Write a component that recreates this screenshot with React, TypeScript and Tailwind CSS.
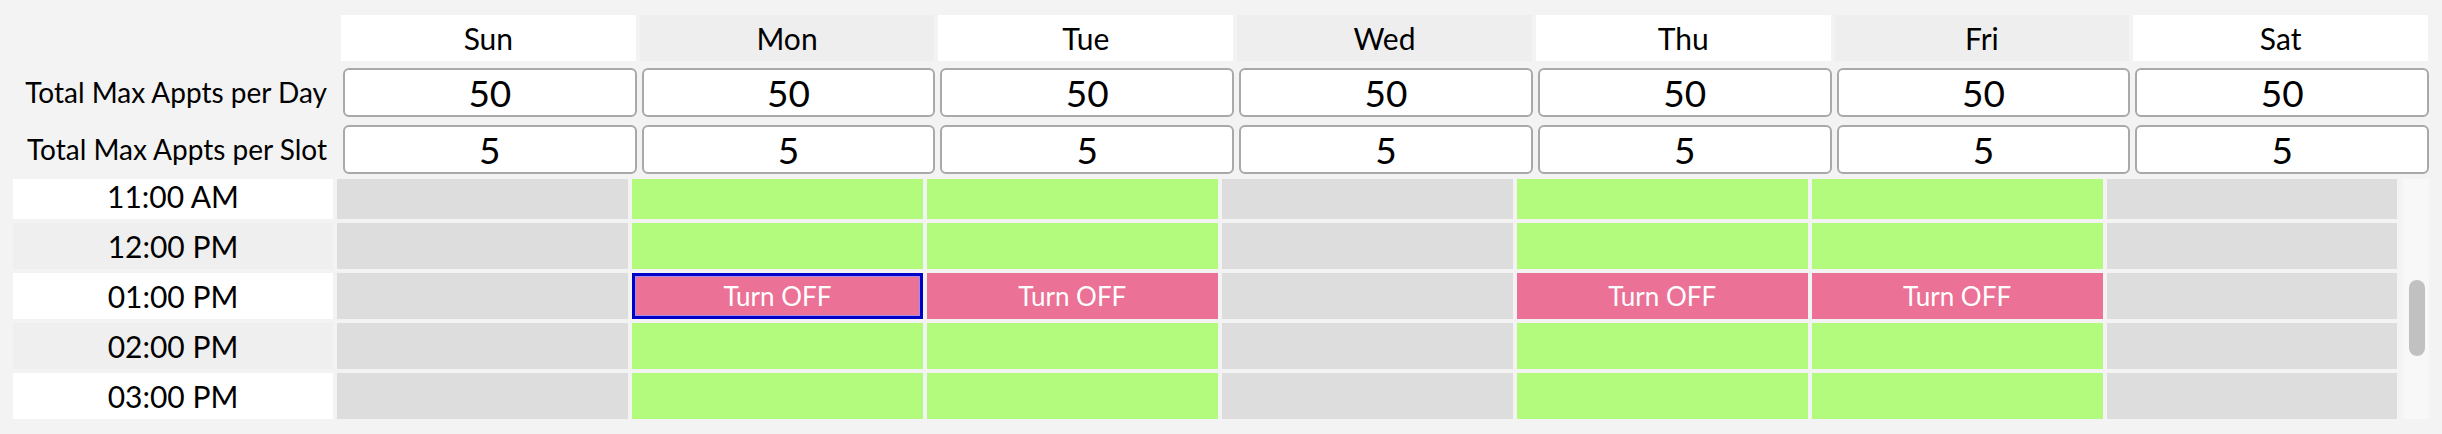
import React, { useEffect, useRef } from "react";

const days = ["Sun", "Mon", "Tue", "Wed", "Thu", "Fri", "Sat"];
const active = [false, true, true, false, true, true, false];
const times = ["11:00 AM", "12:00 PM", "01:00 PM", "02:00 PM", "03:00 PM"];

function Slot({ day, time }: { day: number; time: string }) {
  if (!active[day]) {
    return <div className="bg-[#dddddd]" />;
  }
  if (time === "01:00 PM") {
    const selected = day === 1;
    return (
      <div
        className={
          selected
            ? "bg-[#ec7197] border-[3px] border-[#0000c8] shadow-[inset_0_0_0_1px_#a58ce8] flex items-center justify-center text-white text-[26px] leading-none"
            : "bg-[#ec7197] flex items-center justify-center text-white text-[26px] leading-none"
        }
      >
        Turn OFF
      </div>
    );
  }
  return <div className="bg-[#b3fb7d]" />;
}

export default function App() {
  const scrollRef = useRef<HTMLDivElement>(null);
  useEffect(() => {
    if (scrollRef.current) scrollRef.current.scrollTop = 6;
  }, []);

  return (
    <div className="w-[2442px] h-[434px] bg-[#f3f3f3] px-[13px] pt-[15px] overflow-hidden font-['Lato',sans-serif] text-black">
      <div className="mr-[1px]">
        <div className="grid grid-cols-[324px_repeat(7,minmax(0,1fr))] gap-x-[4px] h-[46px]">
          <div />
          {days.map((d, i) => (
            <div
              key={d}
              className={
                (i % 2 === 0 ? "bg-white" : "bg-[#eeeeee]") +
                " flex items-center justify-center text-[30px] leading-none"
              }
            >
              {d}
            </div>
          ))}
        </div>
        {[
          { label: "Total Max Appts per Day", value: "50", mt: "mt-[6.5px]" },
          { label: "Total Max Appts per Slot", value: "5", mt: "mt-[9px]" },
        ].map((row) => (
          <div
            key={row.label}
            className={
              "grid grid-cols-[324px_repeat(7,minmax(0,1fr))] gap-x-[4px] h-[48px] " +
              row.mt
            }
          >
            <div className="flex items-center justify-end pr-[10px] text-[28px] leading-none whitespace-nowrap">
              {row.label}
            </div>
            {days.map((d) => (
              <div key={d} className="pl-[2px] -mr-[1px]">
                <input
                  type="text"
                  readOnly
                  value={row.value}
                  className="w-full h-full bg-white border-2 border-[#a9a9a9] rounded-[6px] text-center text-[37px] leading-none p-0 outline-none font-['Lato',sans-serif] text-black"
                />
              </div>
            ))}
          </div>
        ))}
      </div>
      <div className="mt-[6.5px] h-[240px] flex">
        <div ref={scrollRef} className="flex-1 min-w-0 h-full overflow-hidden">
          <div className="flex flex-col gap-[4px] pb-[4px] pr-[5px]">
            {times.map((t, r) => (
              <div
                key={t}
                className="grid grid-cols-[320px_repeat(7,minmax(0,1fr))] gap-x-[4px] h-[46px]"
              >
                <div
                  className={
                    (r % 2 === 0 ? "bg-white" : "bg-[#efefef]") +
                    " flex items-center justify-center text-[30px] leading-none"
                  }
                >
                  {t}
                </div>
                {days.map((d, i) => (
                  <Slot key={d} day={i} time={t} />
                ))}
              </div>
            ))}
          </div>
        </div>
        <div className="w-[26.5px] h-full bg-[#f8f8f8] pt-[101px] pl-[6px]">
          <div className="w-[16px] h-[76px] rounded-full bg-[#c1c1c1]" />
        </div>
      </div>
    </div>
  );
}
